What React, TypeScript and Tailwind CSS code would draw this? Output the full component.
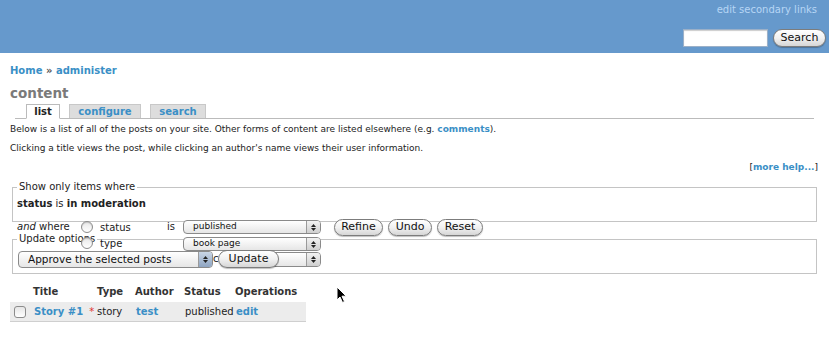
import React from "react";

const F = { fontFamily: '"DejaVu Sans", Verdana, sans-serif' };

function AquaSelect({ label, className, arrowBlue }: { label: string; className: string; arrowBlue?: boolean }) {
  return (
    <div
      className={`absolute flex items-stretch rounded-[4px] border border-[#8a8a8a] bg-gradient-to-b from-white to-[#e6e6e6] overflow-hidden ${className}`}
    >
      <div className="flex-1 flex items-center pl-[9px] text-[#111] whitespace-nowrap overflow-hidden">{label}</div>
      <div
        className={`w-[14px] flex flex-col items-center justify-center gap-[1px] border-l border-[#9a9a9a] ${
          arrowBlue ? "bg-gradient-to-b from-[#c9d6e6] to-[#8fa5c2]" : "bg-gradient-to-b from-[#f2f2f2] to-[#cfcfcf]"
        }`}
      >
        <svg width="5" height="3" viewBox="0 0 5 3"><path d="M0 3 L2.5 0 L5 3Z" fill="#222" /></svg>
        <svg width="5" height="3" viewBox="0 0 5 3"><path d="M0 0 L2.5 3 L5 0Z" fill="#222" /></svg>
      </div>
    </div>
  );
}

function AquaButton({ label, className }: { label: string; className: string }) {
  return (
    <div
      className={`absolute flex items-center justify-center rounded-full border border-[#7c7c7c] bg-gradient-to-b from-white via-[#f1f1f1] to-[#d6d6d6] text-[11px] text-[#111] shadow-[0_1px_1px_rgba(0,0,0,0.25)] ${className}`}
    >
      {label}
    </div>
  );
}

function Radio({ className }: { className: string }) {
  return (
    <div
      className={`absolute w-[12px] h-[12px] rounded-full border border-[#8c8c8c] bg-gradient-to-b from-[#e8e8e8] to-white shadow-[inset_0_1px_1px_rgba(0,0,0,0.15)] ${className}`}
    />
  );
}

export default function App() {
  return (
    <div className="relative w-[829px] h-[342px] bg-white overflow-hidden text-[#222]" style={F}>
      {/* header */}
      <div className="h-[53px] bg-[#6699cc] flex flex-col items-end">
        <div className="mt-[4px] mr-[12px] text-[10px] leading-[12px] text-[#b7d6f5]">edit secondary links</div>
        <div className="mt-[13px] mr-[3px] flex items-center gap-[5px]">
          <div className="w-[85px] h-[18px] bg-white border border-[#9bb0c8] shadow-[inset_0_1px_1px_rgba(0,0,0,0.2)]" />
          <div className="relative w-[53px] h-[18px]">
            <AquaButton label="Search" className="inset-0" />
          </div>
        </div>
      </div>

      <div className="px-[10px]">
        <div className="mt-[11px] text-[10px] leading-[14px] font-bold text-[#3a8fc6]">
          Home <span className="text-[#555]">»</span> administer
        </div>
        <div className="mt-[7px] text-[13.5px] leading-[16px] font-bold text-[#7a7a7a]">content</div>

        {/* tabs */}
        <div className="ml-[5px] mr-[5px] mt-[0px] h-[18px] flex items-end border-b border-[#bbbbbb] pl-[11px] gap-[9px]">
          <div className="h-[15px] w-[34px] mb-[-1px] bg-white border border-[#bbb] border-b-white flex items-center justify-center text-[10px] font-bold text-[#222]">
            list
          </div>
          <div className="h-[14px] w-[72px] bg-[#dddddd] border border-[#c8c8c8] border-b-0 flex items-center justify-center text-[10px] font-bold text-[#3a8fc6]">
            configure
          </div>
          <div className="h-[14px] w-[56px] bg-[#dddddd] border border-[#c8c8c8] border-b-0 flex items-center justify-center text-[10px] font-bold text-[#3a8fc6]">
            search
          </div>
        </div>

        <p className="mt-[5px] text-[9px] leading-[10px]">
          Below is a list of all of the posts on your site. Other forms of content are listed elsewhere (e.g.{" "}
          <span className="font-bold text-[#3a8fc6]">comments</span>).
        </p>
        <p className="mt-[9px] text-[9px] leading-[10px]">
          Clicking a title views the post, while clicking an author's name views their user information.
        </p>
        <div className="mt-[9px] pr-[1px] text-right text-[9px] leading-[10px]">
          [<span className="font-bold text-[#3a8fc6]">more help...</span>]
        </div>
      </div>

      {/* filter / update forms */}
      <div className="relative h-[95px] mt-[8px]">
        <div className="absolute left-[12px] top-[7px] w-[805px] h-[35px] border border-[#c4c4c4]">
          <div className="absolute left-[4px] top-[-7px] bg-white px-[2px] text-[10px] leading-[12px] text-[#222]">
            Show only items where
          </div>
          <div className="absolute left-[4px] top-[10px] text-[10px] leading-[12px] whitespace-nowrap">
            <b>status</b> is <b>in moderation</b>
          </div>
        </div>
        <div className="absolute left-[12px] top-[59px] w-[805px] h-[35px] border border-[#c4c4c4]">
          <div className="absolute left-[4px] top-[-7px] bg-white px-[2px] text-[10px] leading-[12px] text-[#222]">
            Update options
          </div>
        </div>

        <div className="absolute left-[17px] top-[41px] text-[10px] leading-[12px] whitespace-nowrap">
          <i>and</i> where
        </div>
        <Radio className="left-[81px] top-[41px]" />
        <div className="absolute left-[100px] top-[42px] text-[10px] leading-[12px]">status</div>
        <div className="absolute left-[167px] top-[41px] text-[10px] leading-[12px]">is</div>
        <AquaSelect label="published" className="left-[183px] top-[40px] w-[138px] h-[14px] text-[9px]" />
        <AquaButton label="Refine" className="left-[334px] top-[39px] w-[49px] h-[17px]" />
        <AquaButton label="Undo" className="left-[388px] top-[39px] w-[44px] h-[17px]" />
        <AquaButton label="Reset" className="left-[437px] top-[39px] w-[46px] h-[17px]" />

        <Radio className="left-[81px] top-[57px]" />
        <div className="absolute left-[100px] top-[58px] text-[10px] leading-[12px]">type</div>
        <AquaSelect label="book page" className="left-[183px] top-[57px] w-[138px] h-[14px] text-[9px]" />

        <AquaSelect
          label="Approve the selected posts"
          arrowBlue
          className="left-[18px] top-[71px] w-[195px] h-[17px] text-[10.5px]"
        />
        <div className="absolute left-[213px] top-[73px] text-[10px] leading-[12px]">c</div>
        <AquaSelect label="" className="left-[220px] top-[72px] w-[101px] h-[15px] text-[9px]" />
        <AquaButton label="Update" className="left-[218px] top-[70px] w-[61px] h-[18px]" />
      </div>

      {/* table */}
      <div className="ml-[10px] mt-[8px] w-[296px] text-[10px]">
        <div className="flex h-[16px] items-center font-bold text-[#333]">
          <div className="w-[20px]" />
          <div className="w-[64px] pl-[3px]">Title</div>
          <div className="w-[38px] pl-[3px]">Type</div>
          <div className="w-[49px] pl-[3px]">Author</div>
          <div className="w-[51px] pl-[3px]">Status</div>
          <div className="w-[74px] pl-[3px]">Operations</div>
        </div>
        <div className="mt-[3px] flex h-[20px] items-center bg-[#ececec] border-b border-[#cfcfcf] whitespace-nowrap">
          <div className="w-[20px] pl-[4px]">
            <div className="w-[12px] h-[12px] rounded-[3px] border border-[#8c8c8c] bg-gradient-to-b from-[#e6e6e6] to-white" />
          </div>
          <div className="w-[64px] pl-[4px]">
            <span className="font-bold text-[#3a8fc6]">Story #1</span>{"  "}
            <span className="ml-[3px] text-[#e03030]">*</span>
          </div>
          <div className="w-[38px] pl-[3px]">story</div>
          <div className="w-[49px] pl-[4px] font-bold text-[#3a8fc6]">test</div>
          <div className="w-[51px] pl-[4px]">published</div>
          <div className="w-[74px] pl-[4px] font-bold text-[#3a8fc6]">edit</div>
        </div>
      </div>

      {/* mouse cursor */}
      <svg className="absolute left-[336px] top-[286px]" width="12" height="18" viewBox="0 0 12 18">
        <path d="M1 1 L1 14 L4 11 L6.5 16.5 L8.5 15.5 L6 10.2 L10.2 10.2 Z" fill="#000" stroke="#fff" strokeWidth="1" />
      </svg>
    </div>
  );
}
